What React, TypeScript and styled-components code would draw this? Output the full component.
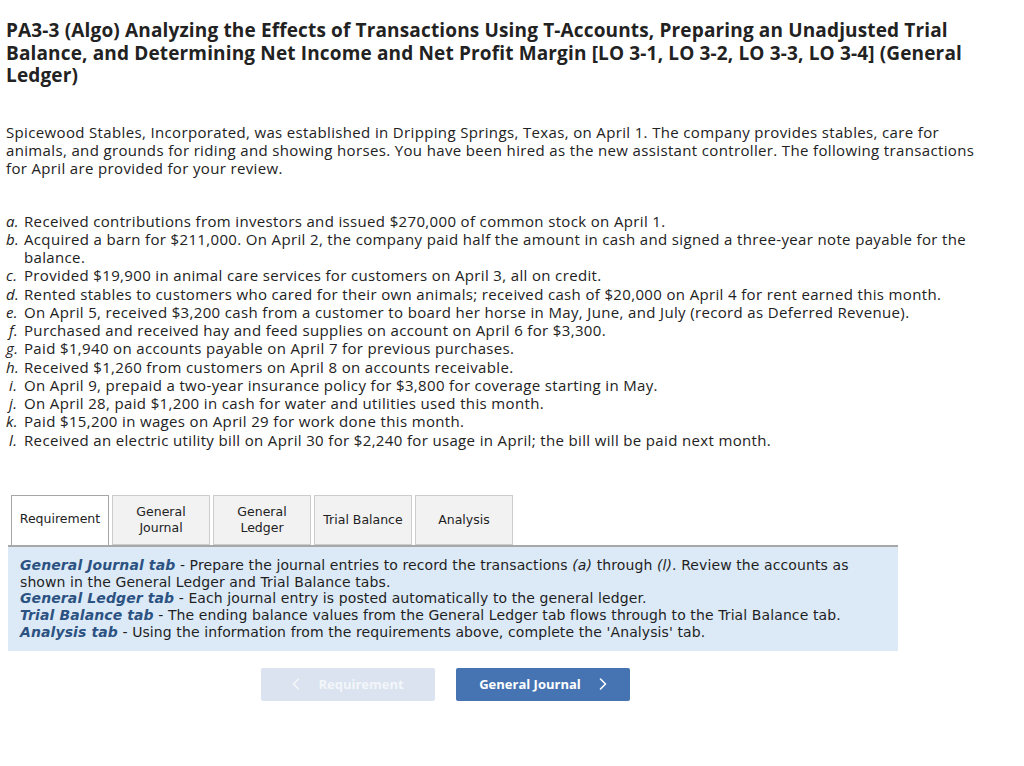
import React from "react";
import styled, { createGlobalStyle } from "styled-components";

const Global = createGlobalStyle`
  html, body { margin: 0; padding: 0; background: #ffffff; }
  body { font-family: "Open Sans", "Helvetica Neue", Arial, sans-serif; color: #222; }
`;

const Page = styled.div`
  padding: 19px 6px 40px 6px;
  width: 1024px;
  box-sizing: border-box;
`;

const Title = styled.h1`
  margin: 0;
  font-family: "Open Sans", Arial, sans-serif;
  font-weight: 700;
  font-size: 19px;
  letter-spacing: 0.15px;
  line-height: 22.5px;
  color: #222;
  white-space: nowrap;
`;

const Intro = styled.p`
  margin: 36px 0 0 0;
  font-size: 15px;
  letter-spacing: 0.35px;
  line-height: 18px;
  color: #222;
  white-space: nowrap;
`;

const List = styled.ol`
  list-style: none;
  margin: 35px 0 0 0;
  padding: 0;
  font-size: 15px;
  letter-spacing: 0.35px;
  line-height: 18.25px;
  color: #222;
`;

const Item = styled.li`
  display: flex;
  white-space: nowrap;
`;

const Letter = styled.span<{ $narrow?: boolean }>`
  font-style: italic;
  width: 18px;
  flex: none;
  padding-left: ${(p) => (p.$narrow ? "3px" : "0")};
  box-sizing: border-box;
`;

const ItemText = styled.span``;

const Tabs = styled.div`
  display: flex;
  gap: 3px;
  margin: 46px 0 0 5px;
  position: relative;
  z-index: 1;
`;

const Tab = styled.div<{ $active?: boolean }>`
  width: 98px;
  height: 50px;
  box-sizing: border-box;
  display: flex;
  align-items: center;
  justify-content: center;
  text-align: center;
  font-family: "DejaVu Sans", Verdana, sans-serif;
  font-size: 12.5px;
  line-height: 16px;
  color: #222;
  background: ${(p) => (p.$active ? "#ffffff" : "#f2f2f2")};
  border: 1px solid ${(p) => (p.$active ? "#a6a6a6" : "#cccccc")};
  border-bottom: ${(p) => (p.$active ? "none" : "1px solid #cccccc")};
  margin-bottom: ${(p) => (p.$active ? "-2px" : "0")};
  padding-bottom: ${(p) => (p.$active ? "2px" : "0")};
`;

const Panel = styled.div`
  margin: 0 0 0 2px;
  width: 890px;
  box-sizing: border-box;
  background: #dceaf7;
  border-top: 2px solid #a8a8a8;
  padding: 10px 12px 10px 12px;
  font-family: "DejaVu Sans", Verdana, sans-serif;
  font-size: 14px;
  letter-spacing: 0.1px;
  line-height: 16.8px;
  color: #1f1f1f;
`;

const PanelLine = styled.div`
  white-space: nowrap;
`;

const Label = styled.span`
  font-weight: 700;
  font-style: italic;
  color: #2c5282;
`;

const Em = styled.span`
  font-style: italic;
`;

const Nav = styled.div`
  display: flex;
  gap: 21px;
  margin: 17px 0 0 255px;
`;

const NavButton = styled.button<{ $disabled?: boolean }>`
  width: 174px;
  height: 33px;
  border: none;
  border-radius: 2px;
  display: flex;
  align-items: center;
  justify-content: center;
  gap: 18px;
  font-family: "Open Sans", Arial, sans-serif;
  font-weight: 700;
  font-size: 13px;
  color: ${(p) => (p.$disabled ? "#f3f6fa" : "#ffffff")};
  background: ${(p) => (p.$disabled ? "#dae3ef" : "#4674b3")};
  cursor: ${(p) => (p.$disabled ? "default" : "pointer")};
  padding: 0;
`;

const Chevron = ({ dir }: { dir: "left" | "right" }) => (
  <svg width="8" height="12" viewBox="0 0 8 12" fill="none">
    <path
      d={dir === "left" ? "M6.5 1 L1.5 6 L6.5 11" : "M1.5 1 L6.5 6 L1.5 11"}
      stroke="currentColor"
      strokeWidth="1.6"
      strokeLinecap="round"
      strokeLinejoin="round"
    />
  </svg>
);

const items: { l: string; t: React.ReactNode; narrow?: boolean }[] = [
  { l: "a.", t: "Received contributions from investors and issued $270,000 of common stock on April 1." },
  {
    l: "b.",
    t: (
      <>
        Acquired a barn for $211,000. On April 2, the company paid half the amount in cash and signed a three-year note payable for the
        <br />
        balance.
      </>
    ),
  },
  { l: "c.", t: "Provided $19,900 in animal care services for customers on April 3, all on credit." },
  { l: "d.", t: "Rented stables to customers who cared for their own animals; received cash of $20,000 on April 4 for rent earned this month." },
  { l: "e.", t: "On April 5, received $3,200 cash from a customer to board her horse in May, June, and July (record as Deferred Revenue)." },
  { l: "f.", t: "Purchased and received hay and feed supplies on account on April 6 for $3,300.", narrow: true },
  { l: "g.", t: "Paid $1,940 on accounts payable on April 7 for previous purchases." },
  { l: "h.", t: "Received $1,260 from customers on April 8 on accounts receivable." },
  { l: "i.", t: "On April 9, prepaid a two-year insurance policy for $3,800 for coverage starting in May.", narrow: true },
  { l: "j.", t: "On April 28, paid $1,200 in cash for water and utilities used this month.", narrow: true },
  { l: "k.", t: "Paid $15,200 in wages on April 29 for work done this month." },
  { l: "l.", t: "Received an electric utility bill on April 30 for $2,240 for usage in April; the bill will be paid next month.", narrow: true },
];

export default function App() {
  return (
    <>
      <Global />
      <Page>
        <Title>
          PA3-3 (Algo) Analyzing the Effects of Transactions Using T-Accounts, Preparing an Unadjusted Trial
          <br />
          Balance, and Determining Net Income and Net Profit Margin [LO 3-1, LO 3-2, LO 3-3, LO 3-4] (General
          <br />
          Ledger)
        </Title>
        <Intro>
          Spicewood Stables, Incorporated, was established in Dripping Springs, Texas, on April 1. The company provides stables, care for
          <br />
          animals, and grounds for riding and showing horses. You have been hired as the new assistant controller. The following transactions
          <br />
          for April are provided for your review.
        </Intro>
        <List>
          {items.map((it) => (
            <Item key={it.l}>
              <Letter $narrow={it.narrow}>{it.l}</Letter>
              <ItemText>{it.t}</ItemText>
            </Item>
          ))}
        </List>
        <Tabs>
          <Tab $active>Requirement</Tab>
          <Tab>
            General
            <br />
            Journal
          </Tab>
          <Tab>
            General
            <br />
            Ledger
          </Tab>
          <Tab>Trial Balance</Tab>
          <Tab>Analysis</Tab>
        </Tabs>
        <Panel>
          <PanelLine>
            <Label>General Journal tab</Label> - Prepare the journal entries to record the transactions <Em>(a)</Em> through <Em>(l)</Em>. Review the accounts as
          </PanelLine>
          <PanelLine>shown in the General Ledger and Trial Balance tabs.</PanelLine>
          <PanelLine>
            <Label>General Ledger tab</Label> - Each journal entry is posted automatically to the general ledger.
          </PanelLine>
          <PanelLine>
            <Label>Trial Balance tab</Label> - The ending balance values from the General Ledger tab flows through to the Trial Balance tab.
          </PanelLine>
          <PanelLine>
            <Label>Analysis tab</Label> - Using the information from the requirements above, complete the 'Analysis' tab.
          </PanelLine>
        </Panel>
        <Nav>
          <NavButton $disabled disabled>
            <Chevron dir="left" />
            Requirement
          </NavButton>
          <NavButton>
            General Journal
            <Chevron dir="right" />
          </NavButton>
        </Nav>
      </Page>
    </>
  );
}
